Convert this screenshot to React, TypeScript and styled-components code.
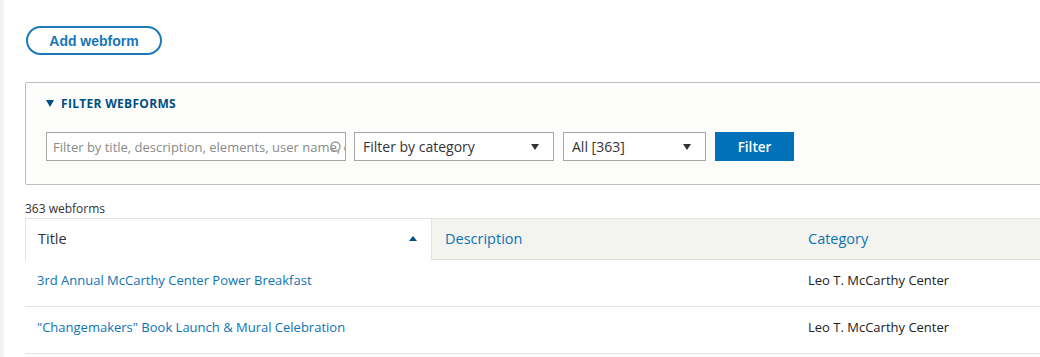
import React from "react";
import styled, { createGlobalStyle } from "styled-components";

const GlobalStyle = createGlobalStyle`
  html, body {
    margin: 0;
    padding: 0;
    background: #ffffff;
    overflow: hidden;
  }
  body {
    font-family: "Open Sans", "Liberation Sans", sans-serif;
    color: #333333;
  }
`;

const Page = styled.div`
  display: flex;
  width: 1040px;
  height: 357px;
  overflow: hidden;
`;

const Gutter = styled.div`
  flex: 0 0 4px;
  background: linear-gradient(to right, #f0f0f0, #f7f7f7);
`;

const Main = styled.div`
  flex: 0 0 1080px;
  padding-left: 21px;
  padding-top: 26px;
  box-sizing: border-box;
`;

const AddButton = styled.button`
  display: block;
  margin-left: 1px;
  width: 136px;
  height: 29px;
  border: 2px solid #1d7ab9;
  border-radius: 15px;
  background: #ffffff;
  color: #1877b6;
  font-family: "Liberation Sans", Arial, sans-serif;
  font-weight: bold;
  font-size: 14px;
  padding: 0;
  cursor: pointer;
`;

const FilterPanel = styled.div`
  margin-top: 27px;
  border: 1px solid #bebebe;
  border-radius: 2px;
  background: #fcfcfa;
  height: 103px;
  box-sizing: border-box;
  padding: 12px 20px 0 20px;
`;

const Summary = styled.div`
  display: flex;
  align-items: center;
  gap: 7px;
  height: 16px;
  font-size: 12px;
  font-weight: 700;
  letter-spacing: 0.3px;
  color: #004f84;
  text-transform: uppercase;
`;

const FilterRow = styled.div`
  display: flex;
  align-items: center;
  margin-top: 21px;
`;

const InputBox = styled.div`
  position: relative;
  display: flex;
  align-items: center;
  width: 300px;
  height: 29px;
  box-sizing: border-box;
  border: 1px solid #a6a6a6;
  background: #ffffff;
  padding: 0 6px;
  font-size: 13px;
  color: #8a8a8a;
  white-space: nowrap;
  overflow: hidden;
`;

const ClearIcon = styled.svg`
  position: absolute;
  right: 3px;
  top: 7px;
`;

const SelectBox = styled.div<{ $w: number; $ml: number }>`
  display: flex;
  align-items: center;
  justify-content: space-between;
  width: ${(p) => p.$w}px;
  margin-left: ${(p) => p.$ml}px;
  height: 29px;
  box-sizing: border-box;
  border: 1px solid #a6a6a6;
  background: #ffffff;
  padding: 0 14px 0 8px;
  font-size: 14px;
  color: #333333;
`;

const FilterButton = styled.button`
  margin-left: 9px;
  width: 79px;
  height: 29px;
  border: 0;
  background: #0071b8;
  color: #ffffff;
  font-family: "Open Sans", "Liberation Sans", sans-serif;
  font-weight: 600;
  font-size: 13.5px;
  padding: 0;
`;

const Count = styled.div`
  margin-top: 14px;
  font-size: 12px;
  line-height: 19px;
  color: #333333;
`;

const Table = styled.div`
  display: grid;
  grid-template-columns: 407px 363px 1fr;
  font-size: 13px;
`;

const HeaderCell = styled.div<{ $active?: boolean }>`
  display: flex;
  align-items: center;
  justify-content: space-between;
  height: 42px;
  box-sizing: border-box;
  padding: 0 14px 2px ${(p) => (p.$active ? 12 : 13)}px;
  font-size: 14.5px;
  background: ${(p) => (p.$active ? "#ffffff" : "#f3f3ef")};
  color: ${(p) => (p.$active ? "#333333" : "#0d73b5")};
  border-top: 1px solid #e2e2de;
  border-left: ${(p) => (p.$active ? "1px solid #e2e2de" : "0")};
  border-right: ${(p) => (p.$active ? "1px solid #e2e2de" : "0")};
  border-bottom: ${(p) => (p.$active ? "0" : "1px solid #dcdcd8")};
`;

const Cell = styled.div<{ $link?: boolean }>`
  display: flex;
  align-items: center;
  height: 47px;
  box-sizing: border-box;
  padding: 0 0 7px ${(p) => (p.$link ? 12 : 13)}px;
  border-bottom: 1px solid #e4e4e0;
  color: ${(p) => (p.$link ? "#0d73b5" : "#222222")};
  white-space: nowrap;
`;

const rows = [
  {
    title: "3rd Annual McCarthy Center Power Breakfast",
    category: "Leo T. McCarthy Center",
  },
  {
    title: "\"Changemakers\" Book Launch & Mural Celebration",
    category: "Leo T. McCarthy Center",
  },
];

function Caret() {
  return (
    <svg width="8" height="6" viewBox="0 0 8 6">
      <path d="M0 0 L8 0 L4 6 Z" fill="#333" />
    </svg>
  );
}

export default function App() {
  return (
    <>
      <GlobalStyle />
      <Page>
        <Gutter />
        <Main>
          <AddButton>Add webform</AddButton>

          <FilterPanel>
            <Summary>
              <svg width="8" height="7" viewBox="0 0 8 7">
                <path d="M0 0 L8 0 L4 7 Z" fill="#004f84" />
              </svg>
              <span>Filter webforms</span>
            </Summary>
            <FilterRow>
              <InputBox>
                Filter by title, description, elements, user name, or role
                <ClearIcon width="13" height="13" viewBox="0 0 13 13">
                  <circle cx="6.5" cy="6.5" r="4.5" fill="none" stroke="#9a9a9a" strokeWidth="1.4" />
                </ClearIcon>
              </InputBox>
              <SelectBox $w={200} $ml={8}>
                <span>Filter by category</span>
                <Caret />
              </SelectBox>
              <SelectBox $w={143} $ml={9}>
                <span>All [363]</span>
                <Caret />
              </SelectBox>
              <FilterButton>Filter</FilterButton>
            </FilterRow>
          </FilterPanel>

          <Count>363 webforms</Count>

          <Table>
            <HeaderCell $active>
              <span>Title</span>
              <svg width="8" height="5" viewBox="0 0 8 5">
                <path d="M0 5 L8 5 L4 0 Z" fill="#004f84" />
              </svg>
            </HeaderCell>
            <HeaderCell>Description</HeaderCell>
            <HeaderCell>Category</HeaderCell>
            {rows.map((r, i) => (
              <React.Fragment key={i}>
                <Cell $link>{r.title}</Cell>
                <Cell />
                <Cell>{r.category}</Cell>
              </React.Fragment>
            ))}
          </Table>
        </Main>
      </Page>
    </>
  );
}
